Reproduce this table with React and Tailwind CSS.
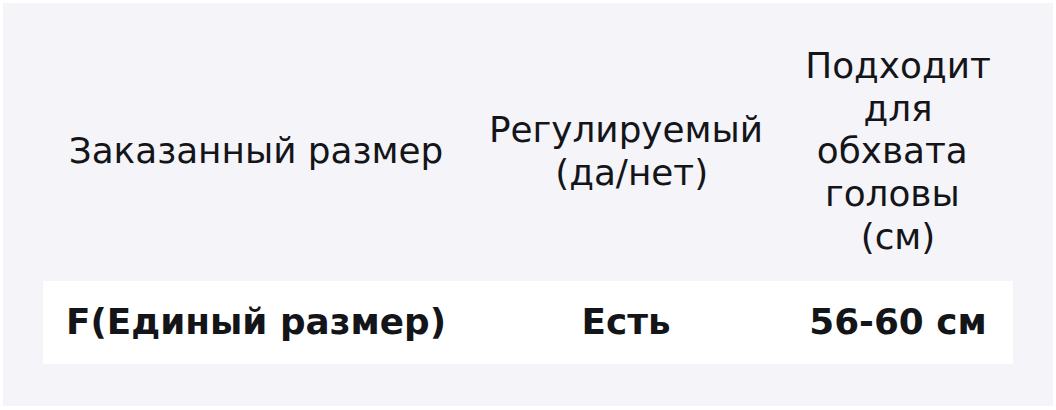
import React from 'react';

const cols = 'grid grid-cols-[426px_314px_230px]';

export default function App() {
  return (
    <div className="w-[1056px] h-[410px] bg-white p-[3px] font-['DejaVu_Sans',sans-serif] text-[#141519]">
      {/* панель с таблицей размеров */}
      <div className="h-[403px] bg-[#f4f4f9] px-10 pt-[19px]">
        <div className={cols + ' text-[35.8px] leading-[42.67px] text-center'}>
          <div className="px-4 py-[23px] flex items-center justify-center">Заказанный размер</div>
          <div className="px-4 py-[23px] flex items-center justify-center">
            {'Регулируемый \u00a0(да/нет)'}
          </div>
          <div className="px-4 py-[23px] flex items-center justify-center">
            {'Подходит для обхвата\u00a0 головы\u00a0 (см)'}
          </div>
        </div>
        <div className={cols + ' bg-white text-[35.8px] leading-[42.67px] font-bold text-center'}>
          <div className="px-4 py-5">F(Единый размер)</div>
          <div className="px-4 py-5">Есть</div>
          <div className="px-4 py-5">56-60 см</div>
        </div>
      </div>
    </div>
  );
}
